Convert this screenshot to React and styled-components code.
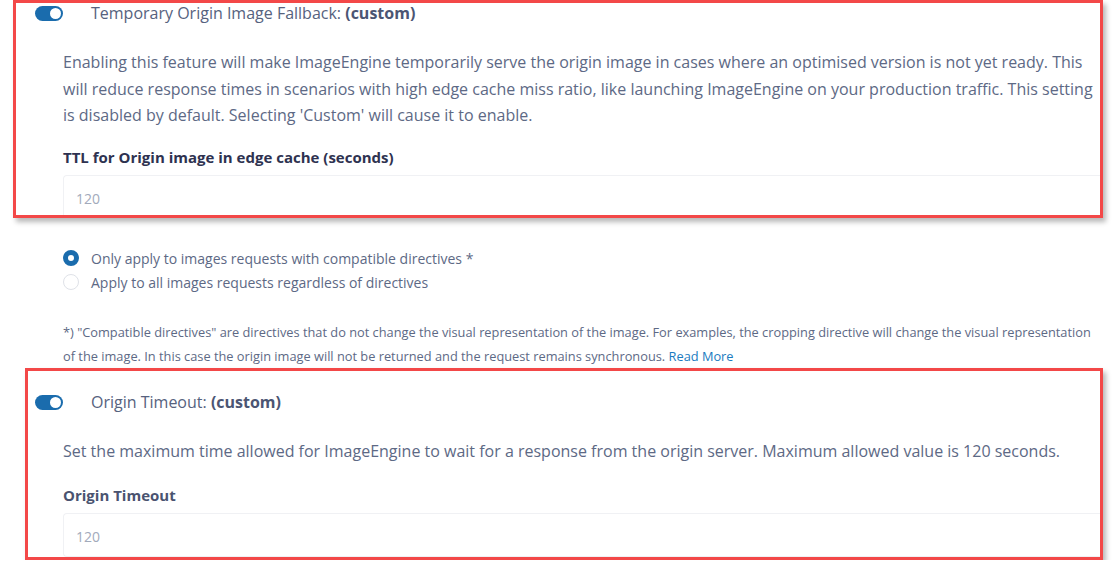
import React from 'react'
import styled, { createGlobalStyle } from 'styled-components'

const GlobalStyle = createGlobalStyle`
  body {
    margin: 0;
    background: #ffffff;
    font-family: "Open Sans", "Noto Sans", sans-serif;
    color: #5d6985;
  }
`;

const Page = () => (
  <>
    <GlobalStyle />
    <Wrapper>
      <Section $offset={13} $top={0} $height={218}>
        <Header>
          <Toggle />
          <Title>Temporary Origin Image Fallback: <b>(custom)</b></Title>
        </Header>
        <Body>
          <Description>
            Enabling this feature will make ImageEngine temporarily serve the origin image in cases where an optimised version is not yet ready. This<br />
            will reduce response times in scenarios with high edge cache miss ratio, like launching ImageEngine on your production traffic. This setting<br />
            is disabled by default. Selecting 'Custom' will cause it to enable.
          </Description>
          <Label $dark $gap={18}>TTL for Origin image in edge cache (seconds)</Label>
          <Input placeholder="120" />
        </Body>
      </Section>

      <Plain>
        <RadioGroup>
          <RadioRow>
            <Radio $checked />
            <RadioText>Only apply to images requests with compatible directives *</RadioText>
          </RadioRow>
          <RadioRow>
            <Radio />
            <RadioText>Apply to all images requests regardless of directives</RadioText>
          </RadioRow>
        </RadioGroup>
        <Footnote>
          *) "Compatible directives" are directives that do not change the visual representation of the image. For examples, the cropping directive will change the visual representation<br />
          of the image. In this case the origin image will not be returned and the request remains synchronous. <Link href="#">Read More</Link>
        </Footnote>
      </Plain>

      <Section $offset={25} $top={21}>
        <Header>
          <Toggle />
          <Title>Origin Timeout: <b>(custom)</b></Title>
        </Header>
        <Body>
          <Description>
            Set the maximum time allowed for ImageEngine to wait for a response from the origin server. Maximum allowed value is 120 seconds.
          </Description>
          <Label $gap={20}>Origin Timeout</Label>
          <Input placeholder="120" />
        </Body>
      </Section>
    </Wrapper>
  </>
);

export default Page;

const Wrapper = styled.div`
  display: flex;
  flex-direction: column;
  width: 1116px;
`;

const Section = styled.section`
  margin-left: ${({ $offset }) => $offset}px;
  width: ${({ $offset }) => 1090 - ($offset - 13)}px;
  box-sizing: border-box;
  ${({ $height }) => $height && `height: ${$height}px;`}
  overflow: hidden;
  border: 3px solid #f34848;
  box-shadow: 3px 4px 5px rgba(0, 0, 0, 0.28);
  padding-top: ${({ $top }) => $top}px;
  padding-left: ${({ $offset }) => 35 - $offset - 3}px;
  background: #ffffff;
`;

const Header = styled.div`
  display: flex;
  align-items: center;
  gap: 28px;
  height: 20px;
`;

const Toggle = styled.span`
  position: relative;
  width: 28px;
  height: 15px;
  border-radius: 8px;
  background: #1a6cad;
  flex-shrink: 0;

  &::after {
    content: '';
    position: absolute;
    top: 2px;
    right: 2px;
    width: 11px;
    height: 11px;
    border-radius: 50%;
    background: #ffffff;
  }
`;

const Title = styled.div`
  font-size: 16px;
  color: #56627e;

  b {
    font-weight: 700;
    color: #4b5573;
  }
`;

const Body = styled.div`
  display: flex;
  flex-direction: column;
  padding-left: 28px;
`;

const Description = styled.p`
  margin: 26px 0 0;
  font-size: 16px;
  line-height: 26.5px;
  white-space: nowrap;
  color: #5d6985;
`;

const Label = styled.div`
  margin-top: ${({ $gap }) => $gap || 19}px;
  font-size: 15px;
  line-height: 20px;
  font-weight: 700;
  color: ${({ $dark }) => ($dark ? '#2e3250' : '#4a5370')};
`;

const Input = styled.input`
  margin-top: 8px;
  height: 44px;
  box-sizing: border-box;
  border: 1px solid #f0f1f4;
  border-right: none;
  border-radius: 4px 0 0 4px;
  padding: 3px 12px 0;
  font-family: inherit;
  font-size: 14px;
  color: #5d6985;
  background: #ffffff;
  outline: none;

  &::placeholder {
    color: #a2aabb;
  }
`;

const Plain = styled.div`
  display: flex;
  flex-direction: column;
  padding-left: 63px;
  padding-right: 20px;
`;

const RadioGroup = styled.div`
  display: flex;
  flex-direction: column;
  margin-top: 28px;
`;

const RadioRow = styled.label`
  display: flex;
  align-items: center;
  gap: 12px;
  height: 24px;
`;

const Radio = styled.span`
  width: 16px;
  height: 16px;
  box-sizing: border-box;
  border-radius: 50%;
  flex-shrink: 0;
  border: ${({ $checked }) => ($checked ? '5px solid #1a6cad' : '1px solid #dfe2e8')};
  background: #ffffff;
`;

const RadioText = styled.span`
  font-size: 14px;
  color: #5d6985;
`;

const Footnote = styled.p`
  margin: 26px 0 0;
  font-size: 12.8px;
  line-height: 24px;
  white-space: nowrap;
  color: #5d6985;
`;

const Link = styled.a`
  color: #1a7bc0;
  text-decoration: none;
`;
